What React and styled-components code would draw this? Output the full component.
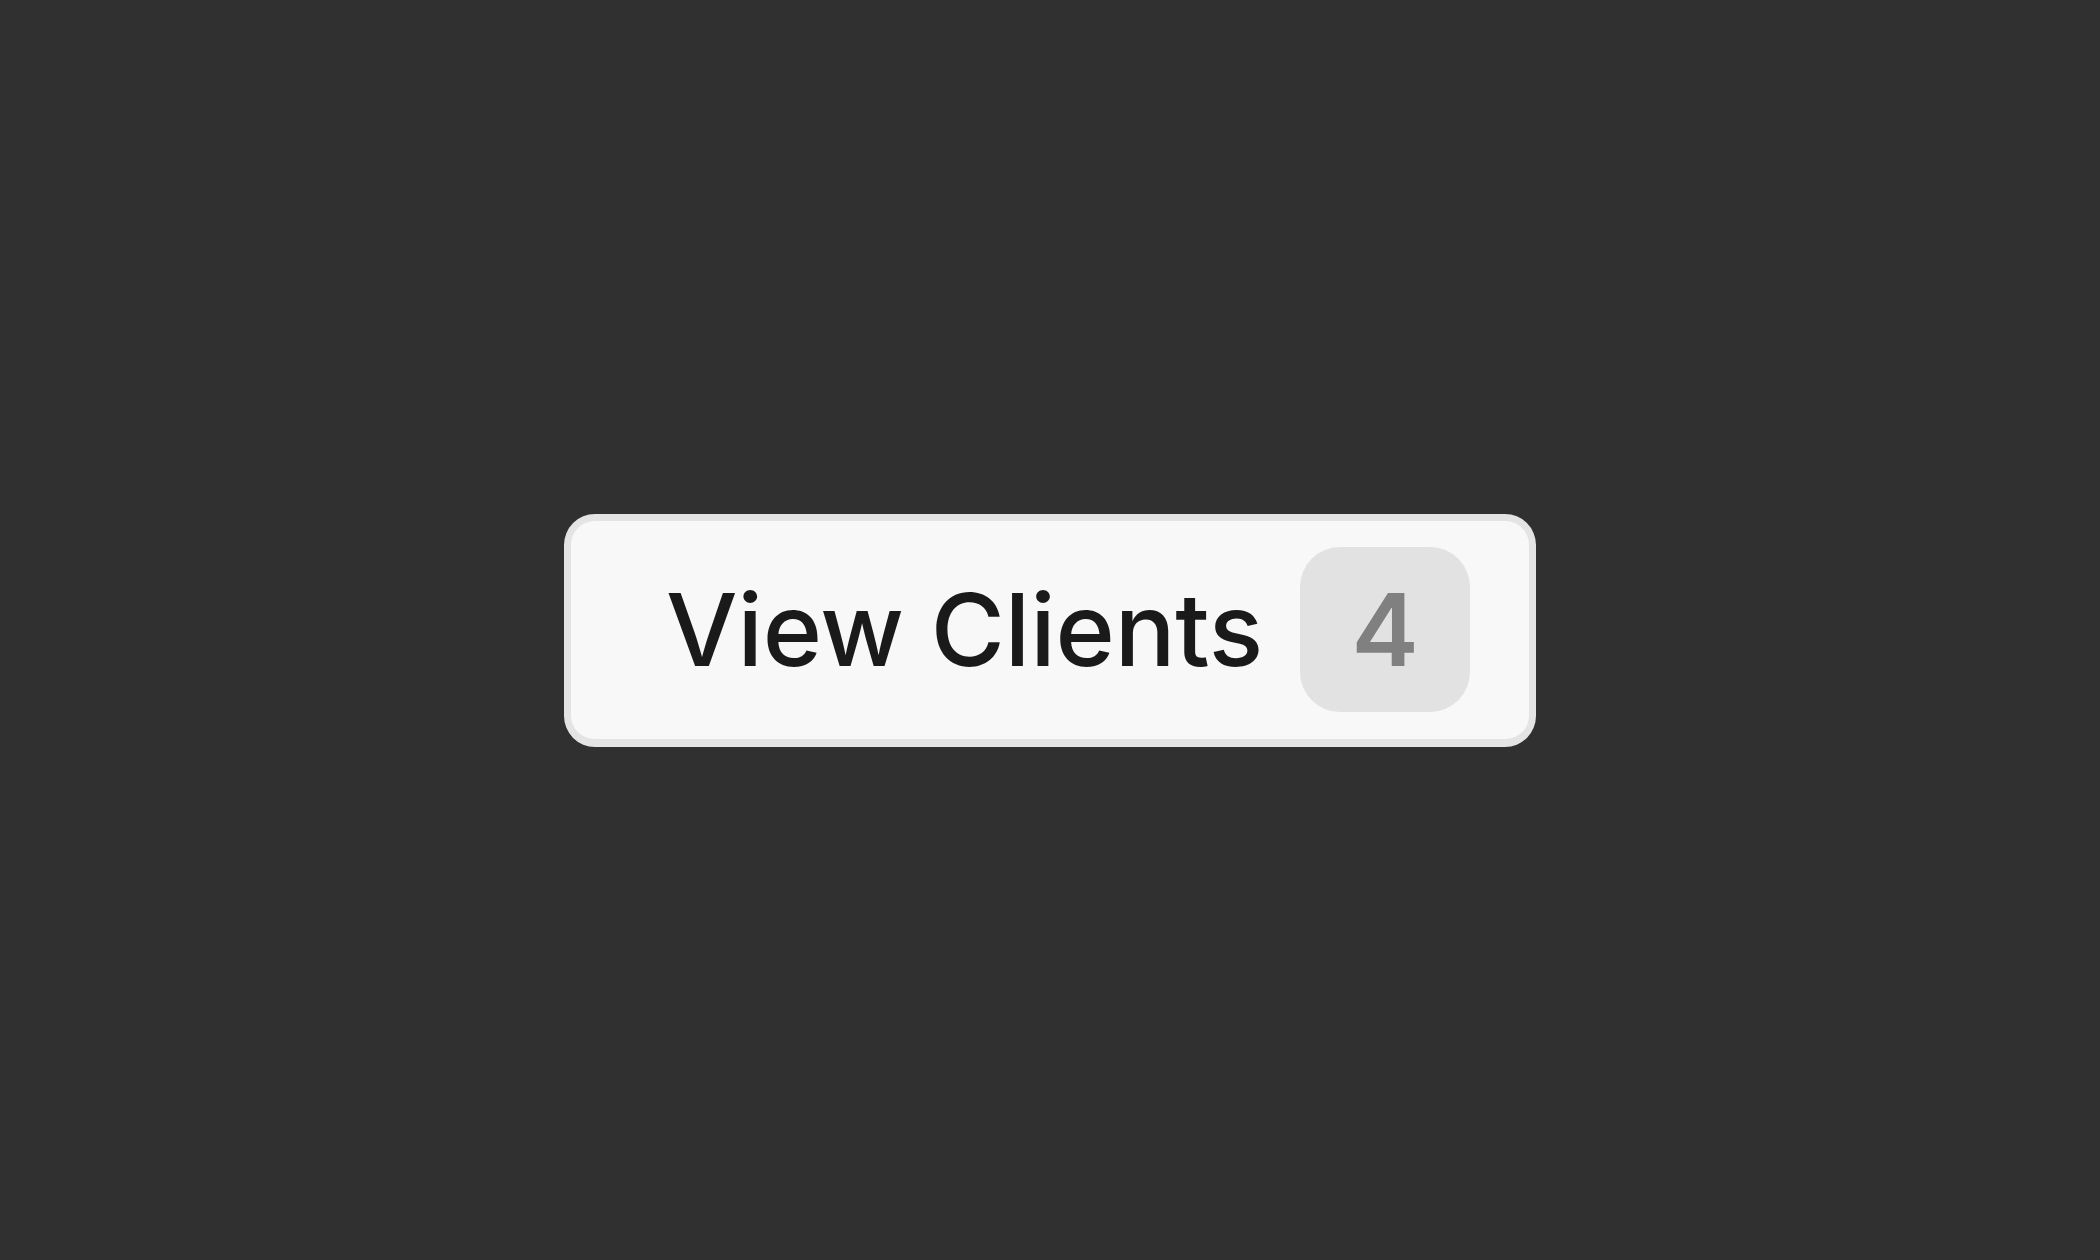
import React from "react";
import styled, { createGlobalStyle } from "styled-components";

const Global = createGlobalStyle`
  html, body {
    margin: 0;
    padding: 0;
    background: #303030;
  }
  #root {
    min-height: 100vh;
  }
`;

const Stage = styled.div`
  min-height: 100vh;
  display: flex;
  align-items: center;
  justify-content: center;
  font-family: Inter, "Noto Sans", sans-serif;
`;

const Button = styled.button`
  box-sizing: border-box;
  display: flex;
  align-items: center;
  gap: 37px;
  height: 233px;
  padding: 0 59px 0 95px;
  background: #f8f8f8;
  border: 7px solid #e4e4e4;
  border-bottom-width: 8px;
  border-radius: 31px;
  font-family: inherit;
  cursor: pointer;
`;

const Label = styled.span`
  font-size: 101px;
  font-weight: 500;
  letter-spacing: -0.1px;
  color: #1a1a1a;
  line-height: 1;
  white-space: nowrap;
`;

const Badge = styled.span`
  flex-shrink: 0;
  display: flex;
  align-items: center;
  justify-content: center;
  width: 170px;
  height: 165px;
  border-radius: 40px;
  background: #e2e2e2;
  color: #808080;
  font-size: 101px;
  font-weight: 600;
  line-height: 1;
`;

export default function App() {
  return (
    <>
      <Global />
      <Stage>
        <Button>
          <Label>View Clients</Label>
          <Badge>4</Badge>
        </Button>
      </Stage>
    </>
  );
}
